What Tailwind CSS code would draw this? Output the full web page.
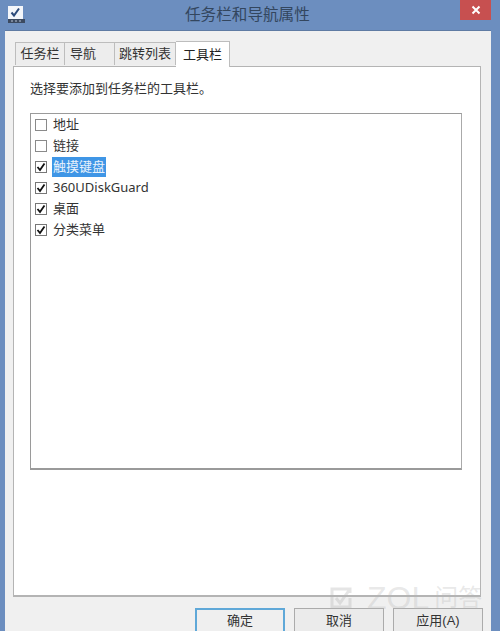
<!DOCTYPE html>
<html lang="zh">
<head>
  <meta charset="UTF-8" />
  <title>任务栏和导航属性</title>
  <script src="https://cdn.jsdelivr.net/npm/@tailwindcss/browser@4"></script>
</head>
<body class="bg-[#6c8ebf] font-['Liberation_Sans','Noto_Sans_CJK_SC',sans-serif] text-[#2a2a2a] overflow-hidden">
  <div class="relative w-[500px] h-[631px] overflow-hidden flex flex-col">
    <!-- Title bar -->
    <div class="relative h-[30px] shrink-0 flex">
      <svg class="ml-[8px] mt-[6px] w-[17px] h-[17px]" viewBox="0 0 17 17">
        <rect x="0" y="0" width="15" height="13" fill="#f4f6fa"/>
        <path d="M3.5 6.5l2.5 3 5-7" fill="none" stroke="#2c4a7a" stroke-width="2"/>
        <rect x="0" y="13" width="17" height="4" fill="#3c4a60"/>
        <path d="M3 15h2M7 15h2M11 15h2" stroke="#b8c4d8" stroke-width="1"/>
      </svg>
      <div class="absolute left-[185px] top-[4px] text-[15.6px] leading-[22px] text-[#33465e] whitespace-nowrap">任务栏和导航属性</div>
      <div class="absolute left-[460px] top-0 w-[31px] h-[20px] bg-[#c75050] flex items-center justify-center">
        <svg class="w-[10px] h-[10px]" viewBox="0 0 10 10"><path d="M1.5 1.5l7 7M8.5 1.5l-7 7" stroke="#fff" stroke-width="2"/></svg>
      </div>
    </div>

    <!-- Client area -->
    <div class="ml-[5px] w-[486px] flex-1 bg-[#f0f0f0] border-t border-[#5f7ba3] pl-[8px] pt-[10px] flex flex-col">
      <!-- Tabs -->
      <div class="flex items-end h-[25px] pl-[2px] text-[13px] relative z-10">
        <div class="w-[50px] h-[23px] mb-[1px] bg-[#ededed] border border-[#bdbdbd] border-b-0 flex items-center justify-center text-[#333]">任务栏</div>
        <div class="w-[50px] h-[23px] mb-[1px] bg-[#ededed] border border-l-0 border-[#bdbdbd] border-b-0 flex items-center pl-[5px] text-[#333]">导航</div>
        <div class="w-[61px] h-[23px] mb-[1px] bg-[#ededed] border border-l-0 border-[#bdbdbd] border-b-0 flex items-center justify-center text-[#333]">跳转列表</div>
        <div class="w-[54px] h-[26px] -mb-[1px] bg-white border border-l-0 border-[#bdbdbd] border-b-0 flex items-center justify-center text-[#222]">工具栏</div>
      </div>

      <!-- Tab page -->
      <div class="w-[468px] h-[531px] bg-white border border-[#b4b4b4] border-b-2 pl-[16px] pt-[13px] shrink-0">
        <p class="text-[13px] leading-[18px] text-[#333]">选择要添加到任务栏的工具栏。</p>
        <div class="mt-[15px] w-[432px] h-[357px] border border-[#9a9a9a] border-r-[#aaa] border-b-2 pl-[4px] text-[13px] text-[#333]">
          <div class="h-[21px] flex items-center gap-[5px]"><span class="w-[12px] h-[12px] border border-[#8a8a8a] bg-white"></span><span class="px-[1px]">地址</span></div>
          <div class="h-[21px] flex items-center gap-[5px]"><span class="w-[12px] h-[12px] border border-[#8a8a8a] bg-white"></span><span class="px-[1px]">链接</span></div>
          <div class="h-[21px] flex items-center gap-[5px]">
            <span class="w-[12px] h-[12px] border border-[#777] bg-white flex items-center justify-center"><svg class="w-[10px] h-[10px]" viewBox="0 0 10 10"><path d="M1.5 5l2.5 3 4.5-6.5" fill="none" stroke="#111" stroke-width="1.8"/></svg></span>
            <span class="px-[1px] bg-[#3f96e6] text-[#e8f2fc] h-[20px] leading-[20px]">触摸键盘</span>
          </div>
          <div class="h-[21px] flex items-center gap-[5px]">
            <span class="w-[12px] h-[12px] border border-[#777] bg-white flex items-center justify-center"><svg class="w-[10px] h-[10px]" viewBox="0 0 10 10"><path d="M1.5 5l2.5 3 4.5-6.5" fill="none" stroke="#111" stroke-width="1.8"/></svg></span>
            <span class="px-[1px] font-['Noto_Sans','Noto_Sans_CJK_SC',sans-serif]">360UDiskGuard</span>
          </div>
          <div class="h-[21px] flex items-center gap-[5px]">
            <span class="w-[12px] h-[12px] border border-[#777] bg-white flex items-center justify-center"><svg class="w-[10px] h-[10px]" viewBox="0 0 10 10"><path d="M1.5 5l2.5 3 4.5-6.5" fill="none" stroke="#111" stroke-width="1.8"/></svg></span>
            <span class="px-[1px]">桌面</span>
          </div>
          <div class="h-[21px] flex items-center gap-[5px]">
            <span class="w-[12px] h-[12px] border border-[#777] bg-white flex items-center justify-center"><svg class="w-[10px] h-[10px]" viewBox="0 0 10 10"><path d="M1.5 5l2.5 3 4.5-6.5" fill="none" stroke="#111" stroke-width="1.8"/></svg></span>
            <span class="px-[1px]">分类菜单</span>
          </div>
        </div>
      </div>

      <!-- Buttons -->
      <div class="flex gap-[9px] pl-[182px] pt-[11px] text-[13px] text-[#333]">
        <button class="w-[90px] h-[34px] pb-[8px] border-2 border-[#5fa8d8] bg-[#efefef] shrink-0">确定</button>
        <button class="w-[90px] h-[34px] pb-[8px] border border-[#ababab] bg-[#ebebeb] shrink-0">取消</button>
        <button class="w-[90px] h-[34px] pb-[8px] border border-[#ababab] bg-[#ebebeb] shrink-0">应用(A)</button>
      </div>
    </div>

    <!-- Watermark -->
    <div class="absolute left-[329px] top-[582px] flex items-center text-[#b4b4b4]/30 whitespace-nowrap">
      <svg class="w-[24px] h-[24px]" viewBox="0 0 24 24"><path d="M21 7V3H3v18h18v-9M7 12l4 5 10-14" fill="none" stroke="#b4b4b4" stroke-opacity="0.35" stroke-width="3"/></svg>
      <span class="ml-[14px] text-[32px] leading-[32px]">ZOL</span>
      <span class="ml-[5px] text-[24px] leading-[32px]">问答</span>
    </div>
  </div>
</body>
</html>
